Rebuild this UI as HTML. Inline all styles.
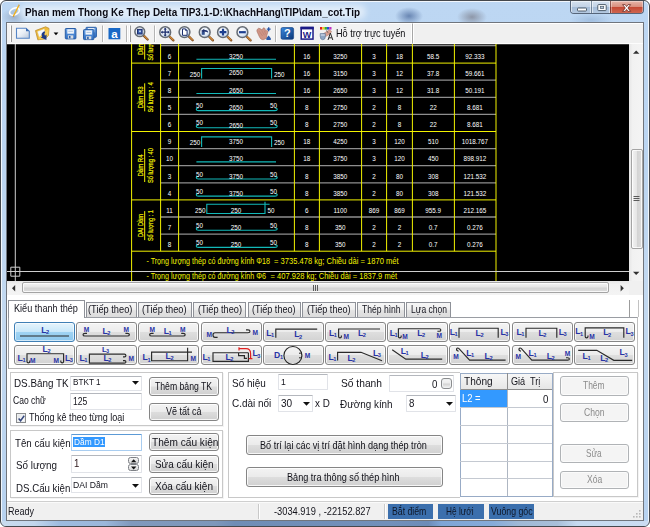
<!DOCTYPE html>
<html lang="vi"><head><meta charset="utf-8"><title>Phan mem Thong Ke Thep Delta TIP3.1</title>
<style>
html,body{margin:0;padding:0}
body{width:650px;height:527px;background:#fff;position:relative;overflow:hidden;font-family:"Liberation Sans",sans-serif;font-size:9.5px}
div,span.t,svg.a{position:absolute;box-sizing:border-box}
span.t{white-space:pre;display:block;transform-origin:0 0}
#win{left:0;top:0;width:650px;height:527px;border:1px solid #45484d;border-radius:6px;
 background:
 radial-gradient(ellipse 13px 9px at 13px 16px,rgba(150,168,192,.75),rgba(150,168,192,0) 100%),
 radial-gradient(ellipse 14px 9px at 408px 15px,rgba(90,120,168,.85),rgba(90,120,168,0) 100%),
 radial-gradient(ellipse 15px 9px at 471px 16px,rgba(130,135,150,.8),rgba(130,135,150,0) 100%),
 radial-gradient(ellipse 22px 7px at 590px 19px,rgba(150,180,215,.7),rgba(150,180,215,0) 100%),
 radial-gradient(ellipse 20px 6px at 100px 20px,rgba(120,140,170,.6),rgba(120,140,170,0) 100%),
 linear-gradient(180deg,#bdd7f3 0,#bbd5f1 30%,#c3d9f0 60%,#b7d2f0 100%);
 box-shadow:inset 0 0 0 1px rgba(255,255,255,.8)}
#bf{left:2px;top:521px;width:646px;height:5px;border-radius:0 0 4px 4px;
 background:linear-gradient(90deg,#c9dbee 0,#c2d6ec 5%,#9dbbdf 9%,#9ab7da 16%,#8099bd 20%,#7d97ba 33%,#6f8db6 36%,#7290ba 60%,#6d8cb8 66%,#7ea5d6 68%,#86abd9 76%,#9fb9d6 80%,#a9bfd9 86%,#c6daf0 89%,#cadcf1 100%)}
#glow{left:20px;top:5px;width:346px;height:14px;border-radius:7px;background:rgba(255,255,255,.55);filter:blur(3px)}
#cap{left:570px;top:0;width:74px;height:14px;border:1px solid #56657a;border-top:none;border-radius:0 0 4px 4px;overflow:hidden;top:1px;height:13px}
.cb{top:0;height:13px;background:linear-gradient(180deg,#d5e1ef 0,#c3d3e6 45%,#a6bdd8 50%,#b7cbe2 100%);box-shadow:inset 0 0 0 1px rgba(255,255,255,.55)}
.cx{left:39px;top:0;width:33px;height:13px;border-left:1px solid rgba(90,40,40,.6);background:linear-gradient(180deg,#e6b6aa 0,#d98e7d 45%,#c54a35 50%,#d06a55 100%);box-shadow:inset 0 0 0 1px rgba(255,255,255,.35)}
#client{left:6px;top:22px;width:638px;height:499px;border:1px solid #70757d;background:#f0f0f0}

#tb{left:7px;top:23px;width:406px;height:21px;background:#f2f2f2;border-top:1px solid #fff;border-bottom:1px solid #fdfdfd;border-right:1px solid #a6a6a6;box-shadow:inset -1px 0 0 #fff}
#tbr{left:413px;top:23px;width:230px;height:21px;background:#f0f0f0;border-top:1px solid #fff;border-left:1px solid #fff;border-bottom:1px solid #fdfdfd}

#cad{left:7px;top:44px;width:622px;height:237px;background:#000}
#vs{left:629px;top:44px;width:14px;height:237px;background:linear-gradient(90deg,#e6e6e6 0,#f1f1f1 25%,#f4f4f4 100%)}
#hs{left:7px;top:281px;width:622px;height:14px;background:linear-gradient(180deg,#e6e6e6 0,#f1f1f1 25%,#f4f4f4 100%)}
#sc{left:629px;top:281px;width:14px;height:14px;background:#f0f0f0}
.thumb{border:1px solid #a4a4a4;border-radius:2px;background:linear-gradient(90deg,#f3f3f3 0,#e6e6e6 45%,#d4d4d4 55%,#dcdcdc 100%);box-shadow:inset 0 0 0 1px rgba(255,255,255,.8)}
.thumb.th{background:linear-gradient(180deg,#f3f3f3 0,#e6e6e6 45%,#d4d4d4 55%,#dcdcdc 100%)}

#low{left:7px;top:295px;width:636px;height:207px;background:#fff}
#page{left:8px;top:316.5px;width:630px;height:52.5px;border:1px solid #9a9da3;border-right-color:#c0c0c0;border-bottom-color:#b4b4b4;background:#fff}
.tab{border:1px solid #8e9198;border-bottom:none;background:linear-gradient(180deg,#f6f6f6 0,#efefef 45%,#e3e3e3 55%,#dcdcdc 100%)}
.tab.act{background:#fff;border-color:#8e9198}
.sb{width:61px;height:19.6px;border:1px solid #868686;border-radius:3px;background:linear-gradient(180deg,#f4f4f4 0,#ececec 48%,#dedede 52%,#d2d2d2 100%);box-shadow:inset 0 0 0 1px rgba(255,255,255,.75)}
.sb.sel{border-color:#3f7fb5;background:linear-gradient(180deg,#e6f4fc 0,#c9e8fa 48%,#9fd3f3 52%,#8ec8ee 100%);box-shadow:inset 0 0 0 1px rgba(255,255,255,.6)}

.pnl{border:1px solid #c8c8c8;background:#fff;box-shadow:1px 1px 0 #f4f4f4}
.tx{border:1px solid #e1e3e8;border-top-color:#b4b7bd;background:#fff;border-radius:1px}
.tx.foc{border-color:#a9cdf0;border-top-color:#5c9ad6}
.chk{border:1px solid #8a8c8e;background:linear-gradient(135deg,#dcdfe2 0,#f4f5f6 60%,#fff 100%);box-shadow:inset 0 0 0 1px #eef0f1}
.chk.r{background:linear-gradient(180deg,#f6f6f6 0,#ececec 45%,#d2d2d2 55%,#e4e4e4 80%,#f8f8f8 100%);border-radius:3px}
.spn{border:1px solid #7e8186;border-radius:2.5px;background:linear-gradient(180deg,#f5f5f5,#d9d9d9)}
.btn{border:1px solid #858585;border-radius:3px;background:linear-gradient(180deg,#f3f3f3 0,#ebebeb 48%,#dddddd 52%,#d0d0d0 100%);box-shadow:inset 0 0 0 1px rgba(255,255,255,.8)}
.btn.dis{border-color:#b0b3b6;background:#f4f4f4;box-shadow:inset 0 0 0 1px #fbfbfb}
#grid{left:459.5px;top:372.5px;width:93px;height:124px;border:1px solid #98abc6;background:#fff}
#gh{left:460.5px;top:373.5px;width:91px;height:16px;background:linear-gradient(180deg,#f7f7f7,#e6e6e6);border-bottom:1px solid #8d8d8d}
#sb{left:7px;top:501px;width:636px;height:19px;background:#f0f0f0;border-top:1px solid #cfcfcf;box-shadow:inset 0 1px 0 #fafafa}
</style></head>
<body>
<div id="win"></div>
<div id="bf"></div>
<div id="glow"></div>
<svg class="a" style="left:7px;top:2px" width="16" height="18" viewBox="0 0 16 18">
<ellipse cx="7.5" cy="9.5" rx="5.2" ry="3.2" transform="rotate(-25 7.5 9.5)" fill="none" stroke="#fff" stroke-width="1.6" opacity=".95"/>
<ellipse cx="7.5" cy="9.5" rx="3.4" ry="1.6" transform="rotate(-25 7.5 9.5)" fill="#a9c3de" opacity=".8"/>
<path d="M11.6 2.4 L12.8 3.0 L7.2 14.2 L5.9 15.3 L6.0 13.6 Z" fill="#f2b21c"/>
<path d="M11.6 2.4 L12.8 3.0 L12.3 4.0 L11.1 3.4 Z" fill="#b9a98c"/>
<path d="M5.9 15.3 L6.0 13.6 L7.2 14.2 Z" fill="#c58a4a"/>
</svg>
<span class="t" style="left:25.00px;top:5.80px;font-size:10.00px;line-height:14px;color:#0a0a14;transform:scaleX(0.9922);font-weight:bold;">Phan mem Thong Ke Thep Delta TIP3.1-D:\KhachHang\TIP\dam_cot.Tip</span>
<div id="cap"><div class="cb" style="left:0;width:20px"></div><div class="cb" style="left:20px;width:19px;border-left:1px solid rgba(60,80,100,.55)"></div><div class="cx"></div>
<svg class="a" style="left:0;top:0" width="73" height="13" viewBox="0 0 73 13">
<rect x="6.5" y="7" width="9" height="3" rx=".8" fill="#fff" stroke="#4e5d6c" stroke-width="1"/>
<rect x="26.8" y="3.6" width="8.4" height="6" rx=".8" fill="#fff" stroke="#4e5d6c" stroke-width="1"/>
<rect x="29.3" y="5.6" width="3.4" height="2" fill="#b5c6da" stroke="#4e5d6c" stroke-width=".7"/>
<path transform="translate(-1.4 0)" d="M53 3.6 L55.6 3.6 L57 5.6 L58.4 3.6 L61 3.6 L58.3 7 L61 10.4 L58.4 10.4 L57 8.4 L55.6 10.4 L53 10.4 L55.7 7 Z" fill="#fff" stroke="#6a2a22" stroke-width=".8" stroke-linejoin="round"/>
</svg></div>
<div id="client"></div>
<div id="tb"></div><div id="tbr"></div>
<svg class="a" style="left:7px;top:23px" width="406" height="21" viewBox="7 23 406 21">
<defs>
<radialGradient id="lens" cx=".4" cy=".35" r=".75"><stop offset="0" stop-color="#ffffff"/><stop offset=".6" stop-color="#dfe9f6"/><stop offset="1" stop-color="#a9c0de"/></radialGradient>
<linearGradient id="doc" x1="0" y1="0" x2="1" y2="1"><stop offset="0" stop-color="#ffffff"/><stop offset=".5" stop-color="#e9eef5"/><stop offset="1" stop-color="#b9c7da"/></linearGradient>
<linearGradient id="hlp" x1="0" y1="0" x2="1" y2="1"><stop offset="0" stop-color="#3b8ae0"/><stop offset="1" stop-color="#0a3576"/></linearGradient>
<linearGradient id="flp" x1="0" y1="0" x2="0" y2="1"><stop offset="0" stop-color="#6aa2e4"/><stop offset="1" stop-color="#2f6fc4"/></linearGradient>
</defs>
<path d="M11.5 25.5V42" stroke="#9a9a9a" stroke-width="1"/><path d="M10.5 25.5V42" stroke="#fff" stroke-width="1"/>
<path d="M130.5 25.5V42" stroke="#9a9a9a" stroke-width="1"/><path d="M129.5 25.5V42" stroke="#fff" stroke-width="1"/>
<path d="M102.5 25.5V42" stroke="#b4b4b4" stroke-width="1"/><path d="M103.5 25.5V42" stroke="#fff" stroke-width="1"/>
<path d="M126.5 25.5V42" stroke="#b4b4b4" stroke-width="1"/><path d="M127.5 25.5V42" stroke="#fff" stroke-width="1"/>
<path d="M154.5 25.5V42" stroke="#b4b4b4" stroke-width="1"/><path d="M155.5 25.5V42" stroke="#fff" stroke-width="1"/>
<path d="M275.5 25.5V42" stroke="#b4b4b4" stroke-width="1"/><path d="M276.5 25.5V42" stroke="#fff" stroke-width="1"/>
<path d="M16.5 28.2H26L29.3 31.2V38.3H16.5Z" fill="url(#doc)" stroke="#5585c6" stroke-width="1.1"/><path d="M26 28V31.2H29.5Z" fill="#3d6db4"/>
<path d="M35.5 30.6L45.6 26.8 49 28.4 48.4 35.6 44.6 39 37.8 39.8Z" fill="#efbb38" stroke="#bd8d2e" stroke-width=".8"/>
<path d="M37.3 31.5L44.4 28.7 45.2 33.8 39.2 37.2Z" fill="#f6f9fd" stroke="#d8c27a" stroke-width=".4"/>
<path d="M39.2 37.2L45.8 31 48.6 29.2 48.2 35.6 44.6 39 38.6 39.6Z" fill="#f6ce58"/>
<path d="M44.2 31.2Q40.2 33.4 42.2 36.4L40.8 37.6 46.4 40 46.6 34.6 45 35.8Q43.6 34 45.2 32Z" fill="#1e3a86"/>
<path d="M53.6 32.6H58.4L56 35.2Z" fill="#000"/>
<g opacity="1"><rect x="65.30" y="28.50" width="10.60" height="10.40" rx=".8" fill="url(#flp)" stroke="#2b5ea6" stroke-width="1"/><rect x="67.30" y="29.30" width="6.60" height="4.37" fill="#f2f6fb"/><path d="M68.30 31.30h4.60" stroke="#9db6d6" stroke-width=".8"/><rect x="67.90" y="35.36" width="5.40" height="3.24" fill="#d9dde3"/><rect x="68.90" y="35.99" width="1.6" height="2.29" fill="#2b5ea6"/></g>
<g opacity="1"><rect x="86.00" y="27.30" width="10.40" height="10.00" rx=".8" fill="url(#flp)" stroke="#2b5ea6" stroke-width="1"/><rect x="88.00" y="28.10" width="6.40" height="4.20" fill="#f2f6fb"/><path d="M89.00 30.10h4.40" stroke="#9db6d6" stroke-width=".8"/><rect x="88.60" y="33.90" width="5.20" height="3.10" fill="#d9dde3"/><rect x="89.60" y="34.50" width="1.6" height="2.20" fill="#2b5ea6"/></g>
<g opacity="1"><rect x="83.50" y="29.60" width="10.40" height="10.00" rx=".8" fill="url(#flp)" stroke="#2b5ea6" stroke-width="1"/><rect x="85.50" y="30.40" width="6.40" height="4.20" fill="#f2f6fb"/><path d="M86.50 32.40h4.40" stroke="#9db6d6" stroke-width=".8"/><rect x="86.10" y="36.20" width="5.20" height="3.10" fill="#d9dde3"/><rect x="87.10" y="36.80" width="1.6" height="2.20" fill="#2b5ea6"/></g>
<rect x="108.5" y="28" width="11.8" height="11.3" fill="#1868c6"/><text x="114.4" y="37.6" font-family="Liberation Sans,sans-serif" font-weight="bold" font-size="11.5" fill="#fff" text-anchor="middle">a</text>
<line x1="143.93" y1="35.83" x2="147.63" y2="39.53" stroke="#7a4a20" stroke-width="2.3" stroke-linecap="round"/><line x1="143.93" y1="35.63" x2="147.43" y2="39.13" stroke="#d08a3c" stroke-width="1.2" stroke-linecap="round"/><circle cx="139.80" cy="31.70" r="4.90" fill="url(#lens)" stroke="#666c74" stroke-width="1.5"/><g transform="translate(139.80 31.70)"><rect x="-2.3" y="-2.3" width="4.6" height="4.6" fill="#3c62b0" stroke="#1c2f6e" stroke-width="1"/><rect x="-.6" y="-1.2" width="1.6" height="1.6" fill="#dfe9f6"/></g>
<line x1="169.69" y1="36.69" x2="173.39" y2="40.39" stroke="#7a4a20" stroke-width="2.3" stroke-linecap="round"/><line x1="169.69" y1="36.49" x2="173.19" y2="39.99" stroke="#d08a3c" stroke-width="1.2" stroke-linecap="round"/><circle cx="165.20" cy="32.20" r="5.40" fill="url(#lens)" stroke="#666c74" stroke-width="1.5"/><g transform="translate(165.20 32.20)"><path d="M-3.6 0H3.6M0 -3.6V3.6" stroke="#1c2f6e" stroke-width="1.3"/><path d="M-4.4 0L-2.6 -1.6V1.6ZM4.4 0L2.6 -1.6V1.6ZM0 -4.4L-1.6 -2.6H1.6ZM0 4.4L-1.6 2.6H1.6Z" fill="#1c2f6e"/></g>
<line x1="188.99" y1="36.59" x2="192.69" y2="40.29" stroke="#7a4a20" stroke-width="2.3" stroke-linecap="round"/><line x1="188.99" y1="36.39" x2="192.49" y2="39.89" stroke="#d08a3c" stroke-width="1.2" stroke-linecap="round"/><circle cx="184.50" cy="32.10" r="5.40" fill="url(#lens)" stroke="#666c74" stroke-width="1.5"/><g transform="translate(184.50 32.10)"><path d="M-2 -3.2H1L2.6 -1.6V3.2H-2Z" fill="#fff" stroke="#1c2f6e" stroke-width="1"/><path d="M1 -3.2V-1.6H2.6" fill="none" stroke="#1c2f6e" stroke-width=".8"/></g>
<line x1="209.19" y1="36.69" x2="212.89" y2="40.39" stroke="#7a4a20" stroke-width="2.3" stroke-linecap="round"/><line x1="209.19" y1="36.49" x2="212.69" y2="39.99" stroke="#d08a3c" stroke-width="1.2" stroke-linecap="round"/><circle cx="204.70" cy="32.20" r="5.40" fill="url(#lens)" stroke="#666c74" stroke-width="1.5"/><g transform="translate(204.70 32.20)"><path d="M-3.6 -1.2L-.4 -3.4 -.4 -2.2Q3.4 -2.6 3.4 .6 2.2 -.8 -.4 -.4L-.4 1Z" fill="#1c2f6e"/><rect x="-3" y="-.2" width="3" height="2.8" fill="#31508f"/></g>
<line x1="227.49" y1="36.69" x2="231.19" y2="40.39" stroke="#7a4a20" stroke-width="2.3" stroke-linecap="round"/><line x1="227.49" y1="36.49" x2="230.99" y2="39.99" stroke="#d08a3c" stroke-width="1.2" stroke-linecap="round"/><circle cx="223.00" cy="32.20" r="5.40" fill="url(#lens)" stroke="#666c74" stroke-width="1.5"/><g transform="translate(223.00 32.20)"><path d="M-3.4 0H3.4M0 -3.4V3.4" stroke="#1d3f8f" stroke-width="2.2"/></g>
<line x1="246.89" y1="36.69" x2="250.59" y2="40.39" stroke="#7a4a20" stroke-width="2.3" stroke-linecap="round"/><line x1="246.89" y1="36.49" x2="250.39" y2="39.99" stroke="#d08a3c" stroke-width="1.2" stroke-linecap="round"/><circle cx="242.40" cy="32.20" r="5.40" fill="url(#lens)" stroke="#666c74" stroke-width="1.5"/><g transform="translate(242.40 32.20)"><path d="M-3.4 0H3.4" stroke="#1d3f8f" stroke-width="2.2"/></g>
<path d="M257.4 29.2Q258.6 27.6 260 28.6L262.2 30 263 28.2Q264.4 27.2 265 28.8L265.6 31 267 30.4Q268.2 30.6 267.8 32L266.8 35.4Q267.6 37.6 265.6 38.8L263 39.8Q260.6 39.6 259.6 37.2L257 31.6Q256.6 30 257.4 29.2Z" fill="#cf9585" stroke="#a86f62" stroke-width=".6"/>
<path d="M259.4 31.4L262.6 36M261.6 30.4L264.4 35.2M264.2 30.6L265.8 34.4" stroke="#b87c70" stroke-width=".6" fill="none"/>
<path d="M266.8 29.2H270.6M268.7 27.2V31.2" stroke="#2453a6" stroke-width="1.3"/>
<path d="M266.4 38.2L268.6 35.6 270.8 38.2V40H266.4Z" fill="#2c5aa8"/>
<rect x="281" y="27.5" width="12.6" height="11.8" rx="1.6" fill="url(#hlp)" stroke="#0c3a80" stroke-width=".6"/><text x="287.3" y="37.4" font-family="Liberation Sans,sans-serif" font-weight="bold" font-size="11" fill="#fff" text-anchor="middle">?</text>
<rect x="301.2" y="27.5" width="11.8" height="11.6" fill="#fff" stroke="#1a1a86" stroke-width="1.5"/><rect x="300.5" y="26.8" width="13.2" height="2.6" fill="#1a1a86"/><text x="307.1" y="38.2" font-family="Liberation Sans,sans-serif" font-weight="bold" font-size="9" fill="#1a1a86" text-anchor="middle">W</text>
<rect x="320.00" y="27" width="2.3" height="2.6" fill="#e02020"/>
<rect x="322.30" y="27" width="2.3" height="2.6" fill="#f0d020"/>
<rect x="324.60" y="27" width="2.3" height="2.6" fill="#30b030"/>
<rect x="326.90" y="27" width="2.3" height="2.6" fill="#2050d0"/>
<rect x="329.20" y="27" width="2.3" height="2.6" fill="#c030c0"/>
<path d="M322 34.5L329.5 29.8 331.6 31.4 330 34 325.6 36.6Z" fill="#d9a090" stroke="#a87468" stroke-width=".5"/>
<path d="M320.2 33.6H325.4V36.2Q325.4 39.8 322.8 39.8 320.2 39.8 320.2 36.2Z" fill="#8ea6c4" stroke="#5c7594" stroke-width=".6"/>
<path d="M320.8 35H324.8" stroke="#e8eef6" stroke-width=".9"/>
<path d="M328 40L330.4 33 332.8 40M329 37.8H331.8" fill="none" stroke="#2a2a2a" stroke-width="1"/>
<path d="M326.4 30.4L328 32.8" stroke="#555" stroke-width=".8"/>
</svg>
<span class="t" style="left:336.00px;top:27.20px;font-size:10.40px;line-height:14px;color:#0c0c10;transform:scaleX(0.8787);">Hỗ trợ trực tuyến</span>
<div id="cad"></div>
<svg class="a" style="left:7px;top:44px" width="622" height="237" viewBox="7 44 622 237" font-family="Liberation Sans,sans-serif">
<rect x="7" y="44" width="622" height="1" fill="#3a3a3a"/>
<path d="M160.6 45.60H496.0M160.6 80.20H496.0M160.6 97.30H496.0M160.6 114.40H496.0M160.6 148.60H496.0M160.6 165.70H496.0M160.6 182.80H496.0M160.6 217.00H496.0M160.6 234.10H496.0" stroke="#8e8e8e" stroke-width="1.3" fill="none"/>
<path d="M131.6 63.10H496.0M131.6 131.50H496.0M131.6 199.90H496.0M131.6 251.20H496.0M131.6 44V281M160.6 44V251.20M178.6 44V251.20M294.4 44V251.20M319.4 44V251.20M361.6 44V251.20M386.6 44V251.20M412.4 44V251.20M454.4 44V251.20M496.0 44V281" stroke="#f2f200" stroke-width="1" fill="none"/>
<path d="M196.4 59.30H276M201.6 78.50V68.50H271.6V78.50M196.4 93.50H276M198.6 108.00Q196.3 108.00 196.3 109.40Q196.3 110.60 198.4 110.60H275Q277.2 110.60 277.2 109.40Q277.2 108.00 274.9 108.00M198.6 125.10Q196.3 125.10 196.3 126.50Q196.3 127.70 198.4 127.70H275Q277.2 127.70 277.2 126.50Q277.2 125.10 274.9 125.10M201.6 146.90V136.90H271.6V146.90M196.4 161.90H276M198.6 176.40Q196.3 176.40 196.3 177.80Q196.3 179.00 198.4 179.00H275Q277.2 179.00 277.2 177.80Q277.2 176.40 274.9 176.40M198.6 193.50Q196.3 193.50 196.3 194.90Q196.3 196.10 198.4 196.10H275Q277.2 196.10 277.2 194.90Q277.2 193.50 274.9 193.50M206.8 204.20H265V213.50H206.8ZM265 204.20V201.70M265 204.20H269.6M198.6 227.70Q196.3 227.70 196.3 229.10Q196.3 230.30 198.4 230.30H275Q277.2 230.30 277.2 229.10Q277.2 227.70 274.9 227.70M198.6 244.80Q196.3 244.80 196.3 246.20Q196.3 247.40 198.4 247.40H275Q277.2 247.40 277.2 246.20Q277.2 244.80 274.9 244.80" stroke="#12b9b9" stroke-width="1.1" fill="none"/>
<g fill="#fff">
<text x="169.60" y="58.86" text-anchor="middle" font-size="6.30">6</text>
<text x="306.80" y="58.86" text-anchor="middle" font-size="6.30">16</text>
<text x="340.20" y="58.86" text-anchor="middle" font-size="6.30">3250</text>
<text x="374.10" y="58.86" text-anchor="middle" font-size="6.30">3</text>
<text x="399.50" y="58.86" text-anchor="middle" font-size="6.30">18</text>
<text x="433.20" y="58.86" text-anchor="middle" font-size="6.30">58.5</text>
<text x="475.00" y="58.86" text-anchor="middle" font-size="6.30">92.333</text>
<text x="236.00" y="58.66" text-anchor="middle" font-size="6.30">3250</text>
<text x="169.60" y="75.96" text-anchor="middle" font-size="6.30">7</text>
<text x="306.80" y="75.96" text-anchor="middle" font-size="6.30">16</text>
<text x="340.20" y="75.96" text-anchor="middle" font-size="6.30">3150</text>
<text x="374.10" y="75.96" text-anchor="middle" font-size="6.30">3</text>
<text x="399.50" y="75.96" text-anchor="middle" font-size="6.30">12</text>
<text x="433.20" y="75.96" text-anchor="middle" font-size="6.30">37.8</text>
<text x="475.00" y="75.96" text-anchor="middle" font-size="6.30">59.661</text>
<text x="236.00" y="75.46" text-anchor="middle" font-size="6.30">2650</text>
<text x="200.20" y="76.86" text-anchor="end" font-size="6.30">250</text>
<text x="274.00" y="76.86" text-anchor="start" font-size="6.30">250</text>
<text x="169.60" y="93.06" text-anchor="middle" font-size="6.30">8</text>
<text x="306.80" y="93.06" text-anchor="middle" font-size="6.30">16</text>
<text x="340.20" y="93.06" text-anchor="middle" font-size="6.30">2650</text>
<text x="374.10" y="93.06" text-anchor="middle" font-size="6.30">3</text>
<text x="399.50" y="93.06" text-anchor="middle" font-size="6.30">12</text>
<text x="433.20" y="93.06" text-anchor="middle" font-size="6.30">31.8</text>
<text x="475.00" y="93.06" text-anchor="middle" font-size="6.30">50.191</text>
<text x="236.00" y="92.86" text-anchor="middle" font-size="6.30">2650</text>
<text x="169.60" y="110.16" text-anchor="middle" font-size="6.30">5</text>
<text x="306.80" y="110.16" text-anchor="middle" font-size="6.30">8</text>
<text x="340.20" y="110.16" text-anchor="middle" font-size="6.30">2750</text>
<text x="374.10" y="110.16" text-anchor="middle" font-size="6.30">2</text>
<text x="399.50" y="110.16" text-anchor="middle" font-size="6.30">8</text>
<text x="433.20" y="110.16" text-anchor="middle" font-size="6.30">22</text>
<text x="475.00" y="110.16" text-anchor="middle" font-size="6.30">8.681</text>
<text x="236.00" y="110.46" text-anchor="middle" font-size="6.30">2650</text>
<text x="196.00" y="108.16" text-anchor="start" font-size="6.30">50</text>
<text x="277.00" y="108.16" text-anchor="end" font-size="6.30">50</text>
<text x="169.60" y="127.26" text-anchor="middle" font-size="6.30">6</text>
<text x="306.80" y="127.26" text-anchor="middle" font-size="6.30">8</text>
<text x="340.20" y="127.26" text-anchor="middle" font-size="6.30">2750</text>
<text x="374.10" y="127.26" text-anchor="middle" font-size="6.30">2</text>
<text x="399.50" y="127.26" text-anchor="middle" font-size="6.30">8</text>
<text x="433.20" y="127.26" text-anchor="middle" font-size="6.30">22</text>
<text x="475.00" y="127.26" text-anchor="middle" font-size="6.30">8.681</text>
<text x="236.00" y="127.56" text-anchor="middle" font-size="6.30">2650</text>
<text x="196.00" y="125.26" text-anchor="start" font-size="6.30">50</text>
<text x="277.00" y="125.26" text-anchor="end" font-size="6.30">50</text>
<text x="169.60" y="144.36" text-anchor="middle" font-size="6.30">9</text>
<text x="306.80" y="144.36" text-anchor="middle" font-size="6.30">18</text>
<text x="340.20" y="144.36" text-anchor="middle" font-size="6.30">4250</text>
<text x="374.10" y="144.36" text-anchor="middle" font-size="6.30">3</text>
<text x="399.50" y="144.36" text-anchor="middle" font-size="6.30">120</text>
<text x="433.20" y="144.36" text-anchor="middle" font-size="6.30">510</text>
<text x="475.00" y="144.36" text-anchor="middle" font-size="6.30">1018.767</text>
<text x="236.00" y="143.86" text-anchor="middle" font-size="6.30">3750</text>
<text x="200.20" y="145.26" text-anchor="end" font-size="6.30">250</text>
<text x="274.00" y="145.26" text-anchor="start" font-size="6.30">250</text>
<text x="169.60" y="161.46" text-anchor="middle" font-size="6.30">10</text>
<text x="306.80" y="161.46" text-anchor="middle" font-size="6.30">18</text>
<text x="340.20" y="161.46" text-anchor="middle" font-size="6.30">3750</text>
<text x="374.10" y="161.46" text-anchor="middle" font-size="6.30">3</text>
<text x="399.50" y="161.46" text-anchor="middle" font-size="6.30">120</text>
<text x="433.20" y="161.46" text-anchor="middle" font-size="6.30">450</text>
<text x="475.00" y="161.46" text-anchor="middle" font-size="6.30">898.912</text>
<text x="236.00" y="161.26" text-anchor="middle" font-size="6.30">3750</text>
<text x="169.60" y="178.56" text-anchor="middle" font-size="6.30">3</text>
<text x="306.80" y="178.56" text-anchor="middle" font-size="6.30">8</text>
<text x="340.20" y="178.56" text-anchor="middle" font-size="6.30">3850</text>
<text x="374.10" y="178.56" text-anchor="middle" font-size="6.30">2</text>
<text x="399.50" y="178.56" text-anchor="middle" font-size="6.30">80</text>
<text x="433.20" y="178.56" text-anchor="middle" font-size="6.30">308</text>
<text x="475.00" y="178.56" text-anchor="middle" font-size="6.30">121.532</text>
<text x="236.00" y="178.86" text-anchor="middle" font-size="6.30">3750</text>
<text x="196.00" y="176.56" text-anchor="start" font-size="6.30">50</text>
<text x="277.00" y="176.56" text-anchor="end" font-size="6.30">50</text>
<text x="169.60" y="195.66" text-anchor="middle" font-size="6.30">4</text>
<text x="306.80" y="195.66" text-anchor="middle" font-size="6.30">8</text>
<text x="340.20" y="195.66" text-anchor="middle" font-size="6.30">3850</text>
<text x="374.10" y="195.66" text-anchor="middle" font-size="6.30">2</text>
<text x="399.50" y="195.66" text-anchor="middle" font-size="6.30">80</text>
<text x="433.20" y="195.66" text-anchor="middle" font-size="6.30">308</text>
<text x="475.00" y="195.66" text-anchor="middle" font-size="6.30">121.532</text>
<text x="236.00" y="195.96" text-anchor="middle" font-size="6.30">3750</text>
<text x="196.00" y="193.66" text-anchor="start" font-size="6.30">50</text>
<text x="277.00" y="193.66" text-anchor="end" font-size="6.30">50</text>
<text x="169.60" y="212.76" text-anchor="middle" font-size="6.30">11</text>
<text x="306.80" y="212.76" text-anchor="middle" font-size="6.30">6</text>
<text x="340.20" y="212.76" text-anchor="middle" font-size="6.30">1100</text>
<text x="374.10" y="212.76" text-anchor="middle" font-size="6.30">869</text>
<text x="399.50" y="212.76" text-anchor="middle" font-size="6.30">869</text>
<text x="433.20" y="212.76" text-anchor="middle" font-size="6.30">955.9</text>
<text x="475.00" y="212.76" text-anchor="middle" font-size="6.30">212.165</text>
<text x="236.00" y="213.06" text-anchor="middle" font-size="6.30">250</text>
<text x="205.40" y="213.06" text-anchor="end" font-size="6.30">250</text>
<text x="267.60" y="213.06" text-anchor="start" font-size="6.30">50</text>
<text x="169.60" y="229.86" text-anchor="middle" font-size="6.30">7</text>
<text x="306.80" y="229.86" text-anchor="middle" font-size="6.30">8</text>
<text x="340.20" y="229.86" text-anchor="middle" font-size="6.30">350</text>
<text x="374.10" y="229.86" text-anchor="middle" font-size="6.30">2</text>
<text x="399.50" y="229.86" text-anchor="middle" font-size="6.30">2</text>
<text x="433.20" y="229.86" text-anchor="middle" font-size="6.30">0.7</text>
<text x="475.00" y="229.86" text-anchor="middle" font-size="6.30">0.276</text>
<text x="236.00" y="230.16" text-anchor="middle" font-size="6.30">250</text>
<text x="196.00" y="227.86" text-anchor="start" font-size="6.30">50</text>
<text x="277.00" y="227.86" text-anchor="end" font-size="6.30">50</text>
<text x="169.60" y="246.96" text-anchor="middle" font-size="6.30">8</text>
<text x="306.80" y="246.96" text-anchor="middle" font-size="6.30">8</text>
<text x="340.20" y="246.96" text-anchor="middle" font-size="6.30">350</text>
<text x="374.10" y="246.96" text-anchor="middle" font-size="6.30">2</text>
<text x="399.50" y="246.96" text-anchor="middle" font-size="6.30">2</text>
<text x="433.20" y="246.96" text-anchor="middle" font-size="6.30">0.7</text>
<text x="475.00" y="246.96" text-anchor="middle" font-size="6.30">0.276</text>
<text x="236.00" y="247.26" text-anchor="middle" font-size="6.30">250</text>
<text x="196.00" y="244.96" text-anchor="start" font-size="6.30">50</text>
<text x="277.00" y="244.96" text-anchor="end" font-size="6.30">50</text>
</g>
<g fill="#f2f200" stroke="#f2f200" stroke-width=".2">
<text transform="translate(142.60 44.00) rotate(-90)" x="0" y="0" text-anchor="middle" textLength="22.0" lengthAdjust="spacingAndGlyphs" font-size="6.4">Dầm R2</text>
<text transform="translate(152.90 44.00) rotate(-90)" x="0" y="0" text-anchor="middle" textLength="33.0" lengthAdjust="spacingAndGlyphs" font-size="6.4">Số lượng : 40</text>
<text transform="translate(142.60 97.30) rotate(-90)" x="0" y="0" text-anchor="middle" textLength="22.0" lengthAdjust="spacingAndGlyphs" font-size="6.4">Dầm R3</text>
<text transform="translate(152.90 97.30) rotate(-90)" x="0" y="0" text-anchor="middle" textLength="30.0" lengthAdjust="spacingAndGlyphs" font-size="6.4">Số lượng : 4</text>
<text transform="translate(142.60 165.50) rotate(-90)" x="0" y="0" text-anchor="middle" textLength="22.0" lengthAdjust="spacingAndGlyphs" font-size="6.4">Dầm R4</text>
<text transform="translate(152.90 165.50) rotate(-90)" x="0" y="0" text-anchor="middle" textLength="35.0" lengthAdjust="spacingAndGlyphs" font-size="6.4">Số lượng : 40</text>
<text transform="translate(142.60 225.60) rotate(-90)" x="0" y="0" text-anchor="middle" textLength="23.0" lengthAdjust="spacingAndGlyphs" font-size="6.4">DAI Dầm</text>
<text transform="translate(152.90 225.60) rotate(-90)" x="0" y="0" text-anchor="middle" textLength="31.0" lengthAdjust="spacingAndGlyphs" font-size="6.4">Số lượng : 1</text>
<text stroke="none" x="146.4" y="264.0" font-size="8.3" textLength="123.6" lengthAdjust="spacingAndGlyphs">- Trọng lượng thép có đường kính Φ18</text>
<text stroke="none" x="274.0" y="264.0" font-size="8.3" textLength="124.7" lengthAdjust="spacingAndGlyphs">=  3735.478 kg; Chiều dài = 1870 mét</text>
<text stroke="none" x="146.4" y="278.5" font-size="8.3" textLength="119.6" lengthAdjust="spacingAndGlyphs">- Trọng lượng thép có đường kính Φ6</text>
<text stroke="none" x="270.6" y="278.5" font-size="8.3" textLength="126.4" lengthAdjust="spacingAndGlyphs">=  407.928 kg; Chiều dài = 1837.9 mét</text>
</g>
<path d="M144.7 28.50V59.50M144.7 83.30V111.30M144.7 149.00V182.00M144.7 211.10V240.10" stroke="#f2f200" stroke-width="1" fill="none"/>
<path d="M15.3 44V281M7 271.5H629M10.8 267.2H19.8V276.2H10.8Z" stroke="#cfcfcf" stroke-width="1" fill="none"/>
</svg>
<div id="vs"></div><div id="hs"></div><div id="sc"></div>
<div class="thumb" style="left:630.5px;top:149px;width:12px;height:100px"></div>
<div class="thumb th" style="left:22px;top:282.4px;width:587px;height:11px"></div>
<svg class="a" style="left:7px;top:44px" width="636" height="251" viewBox="7 44 636 251">
<path d="M633 53.8L636.2 50.6 639.4 53.8Z" fill="#303030"/><path d="M633 271.8H639.4L636.2 275Z" fill="#303030"/>
<path d="M15.2 285V291.4L12 288.2Z" fill="#303030"/><path d="M620.6 285V291.4L623.8 288.2Z" fill="#303030"/>
<path d="M633.5 196.5H639.5M633.5 198.5H639.5M633.5 200.5H639.5" stroke="#5a5a5a" stroke-width="1"/>
<path d="M313.5 285V291M315.5 285V291M317.5 285V291" stroke="#5a5a5a" stroke-width="1"/>
</svg>
<div id="low"></div>
<div style="left:629px;top:299.5px;width:1px;height:17px;background:#9c9c9c"></div><div style="left:637.5px;top:299.5px;width:1px;height:17px;background:#c2c2c2"></div>
<div id="page"></div>
<div class="tab" style="left:85.5px;top:302px;width:51.5px;height:15px"></div>
<span class="t" style="left:88.00px;top:302.60px;font-size:10.40px;line-height:14px;color:#15151f;transform:scaleX(0.8897);">(Tiếp theo)</span>
<div class="tab" style="left:138.4px;top:302px;width:53.6px;height:15px"></div>
<span class="t" style="left:142.40px;top:302.60px;font-size:10.40px;line-height:14px;color:#15151f;transform:scaleX(0.8937);">(Tiếp theo)</span>
<div class="tab" style="left:193.0px;top:302px;width:53.0px;height:15px"></div>
<span class="t" style="left:197.60px;top:302.60px;font-size:10.40px;line-height:14px;color:#15151f;transform:scaleX(0.8817);">(Tiếp theo)</span>
<div class="tab" style="left:247.6px;top:302px;width:53.0px;height:15px"></div>
<span class="t" style="left:252.00px;top:302.60px;font-size:10.40px;line-height:14px;color:#15151f;transform:scaleX(0.8737);">(Tiếp theo)</span>
<div class="tab" style="left:302.0px;top:302px;width:53.6px;height:15px"></div>
<span class="t" style="left:307.00px;top:302.60px;font-size:10.40px;line-height:14px;color:#15151f;transform:scaleX(0.8737);">(Tiếp theo)</span>
<div class="tab" style="left:357.0px;top:302px;width:48.0px;height:15px"></div>
<span class="t" style="left:361.60px;top:302.60px;font-size:10.40px;line-height:14px;color:#15151f;transform:scaleX(0.8241);">Thép hình</span>
<div class="tab" style="left:406.0px;top:302px;width:44.6px;height:15px"></div>
<span class="t" style="left:410.60px;top:302.60px;font-size:10.40px;line-height:14px;color:#15151f;transform:scaleX(0.8187);">Lựa chọn</span>
<div class="tab act" style="left:8px;top:299.5px;width:77px;height:18px"></div>
<span class="t" style="left:13.80px;top:301.80px;font-size:10.40px;line-height:14px;color:#15151f;transform:scaleX(0.8784);">Kiểu thanh thép</span>
<div class="sb sel" style="left:14.0px;top:322.3px"><svg class="a" style="left:-1px;top:-1px;overflow:visible" width="61" height="20" viewBox="0 0 61 20" font-family="Liberation Sans,sans-serif" font-weight="bold" fill="#2733a6"><path d="M6 14H55" fill="none" stroke="#2a2a2a" stroke-width="1.15"/><text x="27.2" y="10.6" font-size="8.6">L</text><text x="32.0" y="12.2" font-size="5.7">2</text></svg></div>
<div class="sb" style="left:76.2px;top:322.3px"><svg class="a" style="left:-1px;top:-1px;overflow:visible" width="61" height="20" viewBox="0 0 61 20" font-family="Liberation Sans,sans-serif" font-weight="bold" fill="#2733a6"><path d="M11 11.4H9Q7 11.4 7 12.7Q7 14 9 14H51.4Q53.4 14 53.4 12.7Q53.4 11.4 51.4 11.4H49.4" fill="none" stroke="#2a2a2a" stroke-width="1.15"/><text x="7.8" y="10.2" font-size="6.6">M</text><text x="26.4" y="11.8" font-size="8.6">L</text><text x="31.2" y="13.4" font-size="5.7">2</text><text x="47.6" y="10.2" font-size="6.6">M</text></svg></div>
<div class="sb" style="left:138.4px;top:322.3px"><svg class="a" style="left:-1px;top:-1px;overflow:visible" width="61" height="20" viewBox="0 0 61 20" font-family="Liberation Sans,sans-serif" font-weight="bold" fill="#2733a6"><path d="M15.6 11.4H13.6Q11.6 11.4 11.6 12.7Q11.6 14 13.6 14H45.2Q47.2 14 47.2 12.7Q47.2 11.4 45.2 11.4H43.2" fill="none" stroke="#2a2a2a" stroke-width="1.15"/><text x="11.6" y="10.2" font-size="6.6">M</text><text x="25.8" y="11.8" font-size="8.6">L</text><text x="30.6" y="13.4" font-size="5.7">1</text><text x="42.0" y="10.2" font-size="6.6">M</text></svg></div>
<div class="sb" style="left:200.6px;top:322.3px"><svg class="a" style="left:-1px;top:-1px;overflow:visible" width="61" height="20" viewBox="0 0 61 20" font-family="Liberation Sans,sans-serif" font-weight="bold" fill="#2733a6"><path d="M16.6 15.3H14Q12 15.3 12 13Q12 10.7 14 10.7H47Q49 10.7 49 9.2Q49 7.8 47 7.8H45" fill="none" stroke="#2a2a2a" stroke-width="1.15"/><text x="5.4" y="15.4" font-size="6.6">M</text><text x="25.4" y="10.6" font-size="8.6">L</text><text x="30.2" y="12.2" font-size="5.7">2</text><text x="51.4" y="13.4" font-size="6.6">M</text></svg></div>
<div class="sb" style="left:262.8px;top:322.3px"><svg class="a" style="left:-1px;top:-1px;overflow:visible" width="61" height="20" viewBox="0 0 61 20" font-family="Liberation Sans,sans-serif" font-weight="bold" fill="#2733a6"><path d="M12.8 15.8V7.1H54.2" fill="none" stroke="#2a2a2a" stroke-width="1.15"/><text x="3.2" y="13.8" font-size="8.6">L</text><text x="8.0" y="15.4" font-size="5.7">1</text><text x="31.2" y="15.4" font-size="8.6">L</text><text x="36.0" y="17.0" font-size="5.7">2</text></svg></div>
<div class="sb" style="left:325.0px;top:322.3px"><svg class="a" style="left:-1px;top:-1px;overflow:visible" width="61" height="20" viewBox="0 0 61 20" font-family="Liberation Sans,sans-serif" font-weight="bold" fill="#2733a6"><path d="M16.4 13.4V14.4Q16.4 15.8 15 15.8Q13.6 15.8 13.6 14.4V7H55" fill="none" stroke="#2a2a2a" stroke-width="1.15"/><text x="4.0" y="13.6" font-size="8.6">L</text><text x="8.8" y="15.2" font-size="5.7">1</text><text x="18.6" y="16.8" font-size="6.6">M</text><text x="33.0" y="13.8" font-size="8.6">L</text><text x="37.8" y="15.4" font-size="5.7">2</text></svg></div>
<div class="sb" style="left:387.2px;top:322.3px"><svg class="a" style="left:-1px;top:-1px;overflow:visible" width="61" height="20" viewBox="0 0 61 20" font-family="Liberation Sans,sans-serif" font-weight="bold" fill="#2733a6"><path d="M14.2 13.4V14.4Q14.2 15.8 12.8 15.8Q11.4 15.8 11.4 14.4V6.7H52.4Q53.8 6.7 53.8 7.9Q53.8 9.2 52.4 9.2H50.4" fill="none" stroke="#2a2a2a" stroke-width="1.15"/><text x="2.8" y="13.6" font-size="8.6">L</text><text x="7.6" y="15.2" font-size="5.7">1</text><text x="15.2" y="16.8" font-size="6.6">M</text><text x="30.2" y="13.8" font-size="8.6">L</text><text x="35.0" y="15.4" font-size="5.7">2</text><text x="49.4" y="16.0" font-size="6.6">M</text></svg></div>
<div class="sb" style="left:449.4px;top:322.3px"><svg class="a" style="left:-1px;top:-1px;overflow:visible" width="61" height="20" viewBox="0 0 61 20" font-family="Liberation Sans,sans-serif" font-weight="bold" fill="#2733a6"><path d="M10 15.8V6.2H49.2V15.8" fill="none" stroke="#2a2a2a" stroke-width="1.15"/><text x="0.8" y="12.6" font-size="8.6">L</text><text x="5.6" y="14.2" font-size="5.7">1</text><text x="26.6" y="13.8" font-size="8.6">L</text><text x="31.4" y="15.4" font-size="5.7">2</text><text x="51.4" y="12.6" font-size="8.6">L</text><text x="56.2" y="14.2" font-size="5.7">3</text></svg></div>
<div class="sb" style="left:511.6px;top:322.3px"><svg class="a" style="left:-1px;top:-1px;overflow:visible" width="61" height="20" viewBox="0 0 61 20" font-family="Liberation Sans,sans-serif" font-weight="bold" fill="#2733a6"><path d="M14 15.8V6.2H44.8V15.8" fill="none" stroke="#2a2a2a" stroke-width="1.15"/><text x="4.4" y="12.6" font-size="8.6">L</text><text x="9.2" y="14.2" font-size="5.7">1</text><text x="26.4" y="13.8" font-size="8.6">L</text><text x="31.2" y="15.4" font-size="5.7">2</text><text x="46.8" y="12.6" font-size="8.6">L</text><text x="51.6" y="14.2" font-size="5.7">3</text></svg></div>
<div class="sb" style="left:573.8px;top:322.3px"><svg class="a" style="left:-1px;top:-1px;overflow:visible" width="61" height="20" viewBox="0 0 61 20" font-family="Liberation Sans,sans-serif" font-weight="bold" fill="#2733a6"><path d="M14 13.4V14.4Q14 15.8 12.6 15.8Q11.2 15.8 11.2 14.4V5.8H49.8V15.8" fill="none" stroke="#2a2a2a" stroke-width="1.15"/><text x="1.2" y="12.4" font-size="8.6">L</text><text x="6.0" y="14.0" font-size="5.7">1</text><text x="15.2" y="16.6" font-size="6.6">M</text><text x="29.2" y="13.4" font-size="8.6">L</text><text x="34.0" y="15.0" font-size="5.7">2</text><text x="51.6" y="12.4" font-size="8.6">L</text><text x="56.4" y="14.0" font-size="5.7">3</text></svg></div>
<div class="sb" style="left:14.0px;top:345.3px"><svg class="a" style="left:-1px;top:-1px;overflow:visible" width="61" height="20" viewBox="0 0 61 20" font-family="Liberation Sans,sans-serif" font-weight="bold" fill="#2733a6"><path d="M15.8 15.4V16.4Q15.8 17.8 14.4 17.8Q13 17.8 13 16.4V8.7H49.6V16.4Q49.6 17.8 48.2 17.8Q46.8 17.8 46.8 16.4V15.4" fill="none" stroke="#2a2a2a" stroke-width="1.15"/><text x="28.6" y="6.8" font-size="8.6">L</text><text x="33.4" y="8.4" font-size="5.7">2</text><text x="3.6" y="15.8" font-size="8.6">L</text><text x="8.4" y="17.4" font-size="5.7">1</text><text x="16.0" y="18.0" font-size="6.6">M</text><text x="39.6" y="18.0" font-size="6.6">M</text><text x="51.0" y="15.8" font-size="8.6">L</text><text x="55.8" y="17.4" font-size="5.7">3</text></svg></div>
<div class="sb" style="left:76.2px;top:345.3px"><svg class="a" style="left:-1px;top:-1px;overflow:visible" width="61" height="20" viewBox="0 0 61 20" font-family="Liberation Sans,sans-serif" font-weight="bold" fill="#2733a6"><path d="M47 11.8H48.6Q49.9 11.8 49.9 10.5Q49.9 9.1 48.4 9.1H13.4V18.1H48.4Q49.9 18.1 49.9 16.9Q49.9 15.6 48.6 15.6H47" fill="none" stroke="#2a2a2a" stroke-width="1.15"/><text x="26.0" y="6.7" font-size="7.6">L</text><text x="30.3" y="8.3" font-size="5.0">3</text><text x="3.4" y="15.8" font-size="8.6">L</text><text x="8.2" y="17.4" font-size="5.7">1</text><text x="27.4" y="15.6" font-size="8.6">L</text><text x="32.2" y="17.2" font-size="5.7">2</text><text x="52.4" y="16.4" font-size="6.6">M</text></svg></div>
<div class="sb" style="left:138.4px;top:345.3px"><svg class="a" style="left:-1px;top:-1px;overflow:visible" width="61" height="20" viewBox="0 0 61 20" font-family="Liberation Sans,sans-serif" font-weight="bold" fill="#2733a6"><path d="M49.6 2.7V15.7H13.6V7.1H54" fill="none" stroke="#2a2a2a" stroke-width="1.15"/><text x="4.6" y="15.0" font-size="8.6">L</text><text x="9.4" y="16.6" font-size="5.7">1</text><text x="27.6" y="13.8" font-size="8.6">L</text><text x="32.4" y="15.4" font-size="5.7">2</text><text x="52.6" y="15.8" font-size="6.6">M</text></svg></div>
<div class="sb" style="left:200.6px;top:345.3px"><svg class="a" style="left:-1px;top:-1px;overflow:visible" width="61" height="20" viewBox="0 0 61 20" font-family="Liberation Sans,sans-serif" font-weight="bold" fill="#2733a6"><path d="M47.4 7.7H12V16.3H47.4V7.7M37.6 7.7V10.6H43.4V13.4H46" fill="none" stroke="#2a2a2a" stroke-width="1.15"/><path d="M38 3.7H45Q49.6 3.7 49.6 8.6V13.6M38 2.2V5.4M47.8 13.6H51.4" fill="none" stroke="#e02020" stroke-width="1.2"/><text x="1.4" y="14.8" font-size="8.6">L</text><text x="6.2" y="16.4" font-size="5.7">1</text><text x="24.4" y="14.6" font-size="8.6">L</text><text x="29.2" y="16.2" font-size="5.7">2</text><text x="51.4" y="11.0" font-size="8.6">L</text><text x="56.2" y="12.6" font-size="5.7">3</text></svg></div>
<div class="sb" style="left:262.8px;top:345.3px"><svg class="a" style="left:-1px;top:-1px;overflow:visible" width="61" height="20" viewBox="0 0 61 20" font-family="Liberation Sans,sans-serif" font-weight="bold" fill="#2733a6"><circle cx="29.9" cy="10.5" r="9" fill="none" stroke="#222" stroke-width="1.1"/><path d="M36 8.2H37.6Q38.8 8.2 38.8 9.3M38.8 11.7Q38.8 12.8 37.6 12.8H36" fill="none" stroke="#222" stroke-width="1"/><text x="11.0" y="12.8" font-size="8.6">D</text><text x="17.0" y="14.4" font-size="5.7">1</text><text x="41.8" y="13.0" font-size="6.6">M</text></svg></div>
<div class="sb" style="left:325.0px;top:345.3px"><svg class="a" style="left:-1px;top:-1px;overflow:visible" width="61" height="20" viewBox="0 0 61 20" font-family="Liberation Sans,sans-serif" font-weight="bold" fill="#2733a6"><path d="M12.6 15.4V7.3H36L57 15.8" fill="none" stroke="#2a2a2a" stroke-width="1.15"/><text x="3.4" y="14.8" font-size="8.6">L</text><text x="8.2" y="16.4" font-size="5.7">1</text><text x="22.4" y="15.6" font-size="8.6">L</text><text x="27.2" y="17.2" font-size="5.7">2</text><text x="48.0" y="10.6" font-size="8.6">L</text><text x="52.8" y="12.2" font-size="5.7">3</text></svg></div>
<div class="sb" style="left:387.2px;top:345.3px"><svg class="a" style="left:-1px;top:-1px;overflow:visible" width="61" height="20" viewBox="0 0 61 20" font-family="Liberation Sans,sans-serif" font-weight="bold" fill="#2733a6"><path d="M5.2 4.7L18.8 14.1H55.2" fill="none" stroke="#2a2a2a" stroke-width="1.15"/><text x="13.8" y="8.6" font-size="8.6">L</text><text x="18.6" y="10.2" font-size="5.7">1</text><text x="33.8" y="12.6" font-size="8.6">L</text><text x="38.6" y="14.2" font-size="5.7">2</text></svg></div>
<div class="sb" style="left:449.4px;top:345.3px"><svg class="a" style="left:-1px;top:-1px;overflow:visible" width="61" height="20" viewBox="0 0 61 20" font-family="Liberation Sans,sans-serif" font-weight="bold" fill="#2733a6"><path d="M9.6 6.2Q7.2 5.6 7.6 3.8Q8.6 2.4 10 3.6L20.6 15.1H56.6" fill="none" stroke="#2a2a2a" stroke-width="1.15"/><text x="4.2" y="14.4" font-size="6.6">M</text><text x="17.2" y="10.8" font-size="8.6">L</text><text x="22.0" y="12.4" font-size="5.7">1</text><text x="35.6" y="13.6" font-size="8.6">L</text><text x="40.4" y="15.2" font-size="5.7">2</text></svg></div>
<div class="sb" style="left:511.6px;top:345.3px"><svg class="a" style="left:-1px;top:-1px;overflow:visible" width="61" height="20" viewBox="0 0 61 20" font-family="Liberation Sans,sans-serif" font-weight="bold" fill="#2733a6"><path d="M9 6.2Q6.6 5.6 7 3.8Q8 2.4 9.4 3.6L19.8 15.1H55.6Q57.4 15.1 57.4 13.9Q57.4 12.7 55.6 12.7H54" fill="none" stroke="#2a2a2a" stroke-width="1.15"/><text x="3.6" y="14.4" font-size="6.6">M</text><text x="16.6" y="10.8" font-size="8.6">L</text><text x="21.4" y="12.4" font-size="5.7">1</text><text x="34.8" y="13.6" font-size="8.6">L</text><text x="39.6" y="15.2" font-size="5.7">2</text><text x="52.8" y="10.8" font-size="6.6">M</text></svg></div>
<div class="sb" style="left:573.8px;top:345.3px"><svg class="a" style="left:-1px;top:-1px;overflow:visible" width="61" height="20" viewBox="0 0 61 20" font-family="Liberation Sans,sans-serif" font-weight="bold" fill="#2733a6"><path d="M4.2 5.3H22.8L39.8 15.3H58.2" fill="none" stroke="#2a2a2a" stroke-width="1.15"/><text x="8.6" y="13.8" font-size="8.6">L</text><text x="13.4" y="15.4" font-size="5.7">1</text><text x="26.2" y="15.8" font-size="8.6">L</text><text x="31.0" y="17.4" font-size="5.7">2</text><text x="45.6" y="10.4" font-size="8.6">L</text><text x="50.4" y="12.0" font-size="5.7">3</text></svg></div>
<div class="pnl" style="left:9.5px;top:372px;width:213px;height:53.5px"></div>
<span class="t" style="left:13.50px;top:376.30px;font-size:10.50px;line-height:14px;color:#14141c;transform:scaleX(0.9386);">DS.Bảng TK</span>
<div class="tx" style="left:70px;top:376px;width:72px;height:14.5px"></div>
<span class="t" style="left:72.60px;top:375.10px;font-size:9.40px;line-height:14px;color:#14141c;transform:scaleX(0.8708);">BTKT 1</span>
<svg class="a" style="left:131.5px;top:381.4px" width="7" height="4" viewBox="0 0 7 4"><path d="M0 0H7L3.5 3.8Z" fill="#111"/></svg>
<span class="t" style="left:13.40px;top:393.60px;font-size:10.40px;line-height:14px;color:#14141c;transform:scaleX(0.8217);">Cao chữ</span>
<div class="tx" style="left:70px;top:393.4px;width:71.5px;height:16.8px"></div>
<span class="t" style="left:73.00px;top:395.00px;font-size:10.40px;line-height:14px;color:#14141c;transform:scaleX(0.8298);">125</span>
<div class="chk" style="left:16px;top:412.6px;width:10.4px;height:10.4px"></div>
<svg class="a" style="left:16px;top:412.6px" width="11" height="11" viewBox="0 0 11 11"><path d="M2.6 5.4L4.6 7.8 8.2 2.8" fill="none" stroke="#35487e" stroke-width="1.5"/></svg>
<span class="t" style="left:28.80px;top:411.00px;font-size:10.40px;line-height:14px;color:#14141c;transform:scaleX(0.8682);">Thống kê theo từng loại</span>
<div class="btn" style="left:149.4px;top:377.4px;width:69.6px;height:18.4px"></div><span class="t" style="left:155.40px;top:379.60px;font-size:10.40px;line-height:14px;color:#101018;transform:scaleX(0.8338);">Thêm bảng TK</span>
<div class="btn" style="left:149.4px;top:402.6px;width:69.6px;height:18.6px"></div><span class="t" style="left:166.40px;top:405.00px;font-size:10.40px;line-height:14px;color:#101018;transform:scaleX(0.8673);">Vẽ tất cả</span>
<div class="pnl" style="left:9.5px;top:429.5px;width:213.5px;height:68px"></div>
<span class="t" style="left:14.60px;top:436.40px;font-size:10.50px;line-height:14px;color:#14141c;transform:scaleX(0.9248);">Tên cấu kiện</span>
<div class="tx foc" style="left:71px;top:434px;width:70.6px;height:16.8px"></div>
<div style="left:73px;top:437.4px;width:31.8px;height:9.8px;background:#3399ff"></div>
<span class="t" style="left:73.60px;top:435.30px;font-size:9.40px;line-height:14px;color:#fff;transform:scaleX(0.8876);">Dầm D1</span>
<span class="t" style="left:16.00px;top:458.00px;font-size:10.50px;line-height:14px;color:#14141c;transform:scaleX(0.9385);">Số lượng</span>
<div class="tx" style="left:71px;top:455px;width:70.6px;height:18px"></div>
<span class="t" style="left:74.00px;top:456.60px;font-size:10.40px;line-height:14px;color:#2a1418;transform:scaleX(0.9250);">1</span>
<div class="spn" style="left:128px;top:457px;width:11.4px;height:7px"></div><div class="spn" style="left:128px;top:464.2px;width:11.4px;height:7px"></div>
<svg class="a" style="left:128px;top:457px" width="12" height="15" viewBox="0 0 12 15"><path d="M3 5.2L5.7 2.2 8.4 5.2Z" fill="#111"/><path d="M3 9.4H8.4L5.7 12.4Z" fill="#111"/></svg>
<span class="t" style="left:16.00px;top:481.00px;font-size:10.50px;line-height:14px;color:#14141c;transform:scaleX(0.9229);">DS.Cấu kiện</span>
<div class="tx" style="left:71px;top:476.6px;width:70.6px;height:16.6px"></div>
<span class="t" style="left:73.00px;top:477.80px;font-size:9.40px;line-height:14px;color:#14141c;transform:scaleX(0.9179);">DAI Dầm</span>
<svg class="a" style="left:131.5px;top:483.8px" width="7" height="4" viewBox="0 0 7 4"><path d="M0 0H7L3.5 3.8Z" fill="#111"/></svg>
<div class="btn" style="left:149.4px;top:432.6px;width:69.6px;height:18.6px"></div><span class="t" style="left:151.60px;top:434.60px;font-size:10.50px;line-height:14px;color:#101018;transform:scaleX(0.9642);">Thêm cấu kiện</span>
<div class="btn" style="left:149.4px;top:454.6px;width:69.6px;height:18.6px"></div><span class="t" style="left:154.60px;top:456.60px;font-size:10.50px;line-height:14px;color:#101018;transform:scaleX(0.9435);">Sửa cấu kiện</span>
<div class="btn" style="left:149.4px;top:476.6px;width:69.6px;height:18.2px"></div><span class="t" style="left:155.00px;top:478.60px;font-size:10.50px;line-height:14px;color:#101018;transform:scaleX(0.9554);">Xóa cấu kiện</span>
<div class="pnl" style="left:227.5px;top:371.5px;width:232px;height:126px;border-right:none;box-shadow:none"></div>
<span class="t" style="left:232.00px;top:376.00px;font-size:10.50px;line-height:14px;color:#14141c;transform:scaleX(0.9491);">Số hiệu</span>
<div class="tx" style="left:278.4px;top:374px;width:49.8px;height:16.4px"></div>
<span class="t" style="left:281.00px;top:375.00px;font-size:9.40px;line-height:14px;color:#14141c;transform:scaleX(0.9250);">1</span>
<span class="t" style="left:232.00px;top:396.00px;font-size:10.50px;line-height:14px;color:#14141c;transform:scaleX(0.9459);">C.dài nối</span>
<div class="tx" style="left:278.4px;top:394.6px;width:34.2px;height:17.6px"></div>
<span class="t" style="left:281.00px;top:396.20px;font-size:10.50px;line-height:14px;color:#14141c;transform:scaleX(0.9589);">30</span>
<svg class="a" style="left:302.5px;top:402.4px" width="7" height="4" viewBox="0 0 7 4"><path d="M0 0H7L3.5 3.8Z" fill="#111"/></svg>
<span class="t" style="left:315.00px;top:396.00px;font-size:10.50px;line-height:14px;color:#14141c;transform:scaleX(0.9397);">x D</span>
<span class="t" style="left:340.60px;top:376.00px;font-size:10.50px;line-height:14px;color:#14141c;transform:scaleX(0.9753);">Số thanh</span>
<div class="tx" style="left:389px;top:375.4px;width:65.2px;height:16.8px"></div>
<span class="t" style="left:431.80px;top:377.00px;font-size:10.50px;line-height:14px;color:#14141c;transform:scaleX(0.9250);">0</span>
<div class="chk r" style="left:441px;top:378px;width:10.8px;height:11.4px"></div>
<span class="t" style="left:340.20px;top:397.00px;font-size:10.50px;line-height:14px;color:#14141c;transform:scaleX(0.9403);">Đường kính</span>
<div class="tx" style="left:406px;top:395px;width:49.8px;height:17.2px"></div>
<span class="t" style="left:408.60px;top:396.40px;font-size:10.50px;line-height:14px;color:#14141c;transform:scaleX(0.9250);">8</span>
<svg class="a" style="left:445.5px;top:402.4px" width="7" height="4" viewBox="0 0 7 4"><path d="M0 0H7L3.5 3.8Z" fill="#111"/></svg>
<div class="btn" style="left:246.0px;top:435.4px;width:197.0px;height:19.2px"></div><span class="t" style="left:260.00px;top:438.60px;font-size:10.40px;line-height:14px;color:#101018;transform:scaleX(0.8780);">Bố trí lại các vị trí đặt hình dạng thép tròn</span>
<div class="btn" style="left:246.0px;top:467.4px;width:197.0px;height:19.2px"></div><span class="t" style="left:287.40px;top:470.60px;font-size:10.40px;line-height:14px;color:#101018;transform:scaleX(0.8772);">Bảng tra thông số thép hình</span>
<div id="grid"></div>
<div id="gh"></div>
<div style="left:507px;top:373px;width:1px;height:123px;background:#aeb6c2"></div>
<div style="left:507px;top:373px;width:1px;height:16.6px;background:#8d8d8d"></div>
<div style="left:460.4px;top:407.0px;width:91.4px;height:1px;background:#c4c9d1"></div>
<div style="left:460.4px;top:425.0px;width:91.4px;height:1px;background:#c4c9d1"></div>
<div style="left:460.4px;top:442.6px;width:91.4px;height:1px;background:#c4c9d1"></div>
<div style="left:460.4px;top:460.6px;width:91.4px;height:1px;background:#c4c9d1"></div>
<div style="left:460.4px;top:478.0px;width:91.4px;height:1px;background:#c4c9d1"></div>
<div style="left:460.4px;top:390px;width:46.6px;height:17px;background:#3399ff"></div>
<span class="t" style="left:462.40px;top:391.60px;font-size:10.40px;line-height:14px;color:#fff;transform:scaleX(0.9059);">L2 =</span>
<span class="t" style="left:543.20px;top:391.80px;font-size:10.50px;line-height:14px;color:#14141c;transform:scaleX(0.9250);">0</span>
<span class="t" style="left:464.00px;top:374.00px;font-size:10.50px;line-height:14px;color:#14141c;transform:scaleX(0.9606);">Thông</span>
<span class="t" style="left:511.00px;top:374.00px;font-size:10.50px;line-height:14px;color:#14141c;transform:scaleX(0.8688);">Giá  Trị</span>
<div class="pnl" style="left:553px;top:372px;width:85px;height:125.4px"></div>
<div class="btn dis" style="left:559.5px;top:376.0px;width:69.5px;height:20.0px"></div><span class="t" style="left:583.45px;top:379.00px;font-size:10.40px;line-height:14px;color:#8b8b8b;transform:scaleX(0.8125);">Thêm</span>
<div class="btn dis" style="left:559.5px;top:403.0px;width:69.5px;height:18.8px"></div><span class="t" style="left:583.95px;top:405.60px;font-size:10.40px;line-height:14px;color:#8b8b8b;transform:scaleX(0.8285);">Chọn</span>
<div class="btn dis" style="left:559.5px;top:444.4px;width:69.5px;height:18.6px"></div><span class="t" style="left:586.45px;top:446.60px;font-size:10.30px;line-height:14px;color:#8b8b8b;transform:scaleX(0.8002);">Sửa</span>
<div class="btn dis" style="left:559.5px;top:470.5px;width:69.5px;height:18.6px"></div><span class="t" style="left:586.65px;top:472.60px;font-size:10.40px;line-height:14px;color:#8b8b8b;transform:scaleX(0.8214);">Xóa</span>
<div id="sb"></div>
<span class="t" style="left:7.60px;top:504.80px;font-size:10.40px;line-height:14px;color:#14141c;transform:scaleX(0.8648);">Ready</span>
<div style="left:258px;top:504px;width:1px;height:15px;background:#c9c9c9"></div><div style="left:259px;top:504px;width:1px;height:15px;background:#fff"></div>
<div style="left:384px;top:504px;width:1px;height:15px;background:#c9c9c9"></div><div style="left:385px;top:504px;width:1px;height:15px;background:#fff"></div>
<span class="t" style="left:274.40px;top:504.80px;font-size:10.40px;line-height:14px;color:#14141c;transform:scaleX(0.8952);">-3034.919 , -22152.827</span>
<div style="left:388.0px;top:504.4px;width:45.2px;height:14.6px;background:#3b6fad"></div>
<span class="t" style="left:392.40px;top:504.80px;font-size:10.40px;line-height:14px;color:#0e1626;transform:scaleX(0.8382);">Bắt điểm</span>
<div style="left:438.4px;top:504.4px;width:45.2px;height:14.6px;background:#3b6fad"></div>
<span class="t" style="left:446.00px;top:504.80px;font-size:10.30px;line-height:14px;color:#0e1626;transform:scaleX(0.8057);">Hệ lưới</span>
<div style="left:489.0px;top:504.4px;width:45.2px;height:14.6px;background:#3b6fad"></div>
<span class="t" style="left:490.60px;top:504.80px;font-size:10.40px;line-height:14px;color:#0e1626;transform:scaleX(0.8430);">Vuông góc</span>
<svg class="a" style="left:632px;top:509px" width="10" height="10" viewBox="0 0 10 10"><g fill="#b8b8b8"><rect x="7" y="1" width="1.6" height="1.6"/><rect x="4" y="4" width="1.6" height="1.6"/><rect x="7" y="4" width="1.6" height="1.6"/><rect x="1" y="7" width="1.6" height="1.6"/><rect x="4" y="7" width="1.6" height="1.6"/><rect x="7" y="7" width="1.6" height="1.6"/></g></svg>
</body></html>
